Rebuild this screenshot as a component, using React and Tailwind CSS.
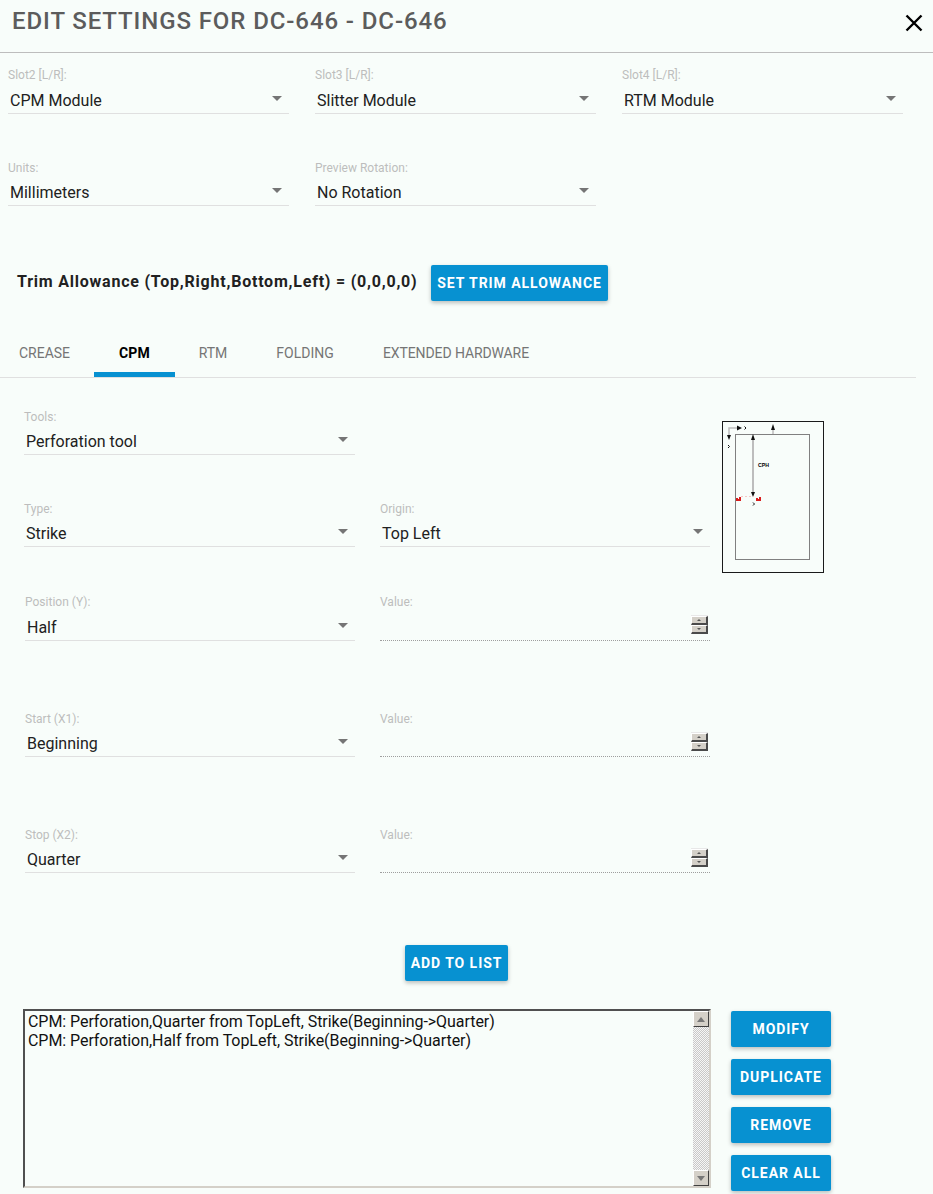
const Arrow = () => (
  <svg width="10" height="5" viewBox="0 0 10 5" className="shrink-0">
    <path d="M0 0H10L5 5Z" fill="#757575" />
  </svg>
);

function Field({ label, value, low, className = "" }) {
  return (
    <div className={`h-[46px] flex flex-col ${className}`}>
      <div className={`text-xs leading-[15px] text-[#bdbdbd] whitespace-nowrap ${low ? "h-[14px] mt-[1px]" : "h-[15px]"}`}>{label}</div>
      <div className="flex-1 flex items-center justify-between border-b border-[#e0e0e0] pl-[2px] pr-[7px]">
        <span className="text-base leading-5 text-[#212121] whitespace-nowrap mt-[6px]">{value}</span>
        <span className="flex"><Arrow /></span>
      </div>
    </div>
  );
}

function Spin({ high }) {
  return (
    <div className={`flex flex-col w-[17px] border-t border-[#e8e8e8] ${high ? "mb-[6px]" : "mb-[5px]"}`}>
      {["M2 3H6L4 1Z", "M2 1H6L4 3Z"].map((d) => (
        <div key={d} className="h-[9px] bg-[#d4d0c8] border-r-2 border-b-2 border-t border-l border-t-white border-l-white border-r-[#4a4a4a] border-b-[#4a4a4a] flex items-center justify-center">
          <svg width="8" height="4" viewBox="0 0 8 4"><path d={d} fill="#555" /></svg>
        </div>
      ))}
    </div>
  );
}

function ValueField({ high }) {
  return (
    <div className="h-[46px] flex flex-col">
      <div className={`text-xs leading-[15px] text-[#bdbdbd] ${high ? "h-[15px]" : "h-[14px] mt-[1px]"}`}>Value:</div>
      <div className="flex-1 flex items-end justify-end border-b border-dotted border-[#9e9e9e] pr-[2px]">
        <Spin high={high} />
      </div>
    </div>
  );
}

function Btn({ children, className = "" }) {
  return (
    <button className={`h-9 flex items-center justify-center rounded-[2px] bg-[#0791d1] text-white text-sm font-bold tracking-[0.95px] whitespace-nowrap shadow-[0_2px_4px_rgba(0,0,0,0.25)] ${className}`}>
      {children}
    </button>
  );
}

function Tab({ children, active, className = "" }) {
  return (
    <div className={`h-[48px] flex items-center justify-center text-sm border-b-[5px] pt-[4px] ${active ? "border-[#0791d1] text-black font-bold tracking-[0.2px]" : "border-transparent text-[#757575]"} ${className}`}>
      {children}
    </div>
  );
}

function Preview() {
  return (
    <svg width="102" height="152" viewBox="0 0 102 152" className="block">
      <rect x="0.5" y="0.5" width="101" height="151" fill="none" stroke="#1a1a1a" />
      <rect x="13.5" y="13.5" width="74" height="125" fill="none" stroke="#808080" />
      <path d="M7 14V7H16" fill="none" stroke="#bdbdbd" strokeWidth="1.5" />
      <path d="M15 4.5L20 7L15 9.5Z M5 14H9L7 19Z M49 9L51 3L53 9Z M29 19L31 13L33 19Z M29 71H33L31 76Z" fill="#111" />
      <rect x="50" y="9" width="2" height="4" fill="#ccc" />
      <rect x="30" y="19" width="2" height="52" fill="#bdbdbd" />
      <path d="M19 75.5H32" stroke="#f5c6c6" strokeDasharray="2 2" />
      <path d="M14 77H16V80H14Z M16 78H19V80H16Z M17 76H19V78H17Z M34 77H36V80H34Z M36 78H39V80H36Z M37 76H39V78H37Z" fill="#d81e1e" shapeRendering="crispEdges" />
      <text x="36" y="46" fontSize="5.5" fontWeight="700" textLength="11" lengthAdjust="spacingAndGlyphs" fontFamily="'Liberation Sans',sans-serif" fill="#000">CPH</text>
      <path d="M22.5 5.5L24 7L22.5 8.5 M6 24L7.5 25.5L6 27 M31 81.5L32.5 83L31 84.5" fill="none" stroke="#111" />
    </svg>
  );
}

function Listbox() {
  return (
    <div className="w-[688px] h-[179px] flex border-2 border-t-[#505050] border-l-[#505050] border-r-[#d4d0c8] border-b-[#d4d0c8]">
      <div className="flex-1 pl-[3px] pt-[1px] text-base leading-[19px] tracking-[-0.06px] text-[#111] whitespace-nowrap">
        <div>CPM: Perforation,Quarter from TopLeft, Strike(Beginning-&gt;Quarter)</div>
        <div>CPM: Perforation,Half from TopLeft, Strike(Beginning-&gt;Quarter)</div>
      </div>
      <div className="w-4 flex flex-col bg-[repeating-conic-gradient(#c8c8c8_0_25%,#f6f6f6_0_50%)] bg-[length:2px_2px]">
        <div className="h-4 bg-[#d4d0c8] border border-t-white border-l-white border-r-[#404040] border-b-[#404040] flex items-center justify-center">
          <svg width="8" height="5" viewBox="0 0 8 5"><path d="M0 5H8L4 0Z" fill="#777" /></svg>
        </div>
        <div className="flex-1" />
        <div className="h-4 bg-[#d4d0c8] border border-t-white border-l-white border-r-[#404040] border-b-[#404040] flex items-center justify-center">
          <svg width="8" height="5" viewBox="0 0 8 5"><path d="M0 0H8L4 5Z" fill="#777" /></svg>
        </div>
      </div>
    </div>
  );
}

export default function App() {
  return (
    <div className="w-[933px] h-[1194px] overflow-hidden bg-[#f8fdfa] font-['Roboto',sans-serif]">
      <header className="h-[53px] flex items-start justify-between border-b border-[#bdbdbd] pl-3 pr-[7px]">
        <h1 className="text-2xl leading-[42px] font-medium tracking-[0.9px] text-[#5c5c5c] whitespace-nowrap">EDIT SETTINGS FOR DC-646 - DC-646</h1>
        <svg width="24" height="24" viewBox="0 0 24 24" className="mt-[11px]">
          <path d="M4.5 4.5L19.5 19.5M19.5 4.5L4.5 19.5" stroke="#000" strokeWidth="2.4" fill="none" />
        </svg>
      </header>

      <div className="pl-2 pt-[15px] grid grid-cols-[281px_281px_281px] gap-x-[26px] grid-rows-[92px_46px]">
        <Field label="Slot2 [L/R]:" value="CPM Module" />
        <Field label="Slot3 [L/R]:" value="Slitter Module" />
        <Field label="Slot4 [L/R]:" value="RTM Module" />
        <Field low label="Units:" value="Millimeters" />
        <Field low label="Preview Rotation:" value="No Rotation" />
      </div>

      <div className="mt-[59px] pl-[17px] flex items-center">
        <span className="w-[414px] text-base font-bold text-[#212121] whitespace-nowrap tracking-[0.78px] mb-[2px]">Trim Allowance (Top,Right,Bottom,Left) = (0,0,0,0)</span>
        <Btn className="w-[177px]">SET TRIM ALLOWANCE</Btn>
      </div>

      <div className="mt-[28px] w-[916px] flex border-b border-[#e0e0e0] h-[49px]">
        <Tab className="w-[89px]">CREASE</Tab>
        <Tab active className="w-[81px] ml-[5px]">CPM</Tab>
        <Tab className="w-[76px]">RTM</Tab>
        <Tab className="w-[108px]">FOLDING</Tab>
        <Tab className="w-[194px] tracking-[-0.1px]">EXTENDED HARDWARE</Tab>
      </div>

      <div className="mt-[31px] pl-[25px] grid grid-cols-[330px_330px_102px] gap-x-[25px] grid-rows-[92px_94px_116px_116px_46px]">
        <Field low className="-ml-[1px]" label="Tools:" value="Perforation tool" />
        <div />
        <div className="row-span-2 -ml-[13px] mt-[12px]"><Preview /></div>
        <Field low className="-ml-[1px]" label="Type:" value="Strike" />
        <Field low label="Origin:" value="Top Left" />
        <Field label="Position (Y):" value="Half" />
        <ValueField high />
        <div />
        <Field low label="Start (X1):" value="Beginning" />
        <ValueField />
        <div />
        <Field low label="Stop (X2):" value="Quarter" />
        <ValueField />
      </div>

      <div className="mt-[72px] pl-[405px]">
        <Btn className="w-[103px]">ADD TO LIST</Btn>
      </div>

      <div className="mt-[28px] pl-[23px] flex gap-[20px]">
        <Listbox />
        <div className="mt-[2px] w-[100px] flex flex-col gap-3">
          <Btn>MODIFY</Btn>
          <Btn>DUPLICATE</Btn>
          <Btn>REMOVE</Btn>
          <Btn>CLEAR ALL</Btn>
        </div>
      </div>
    </div>
  );
}
